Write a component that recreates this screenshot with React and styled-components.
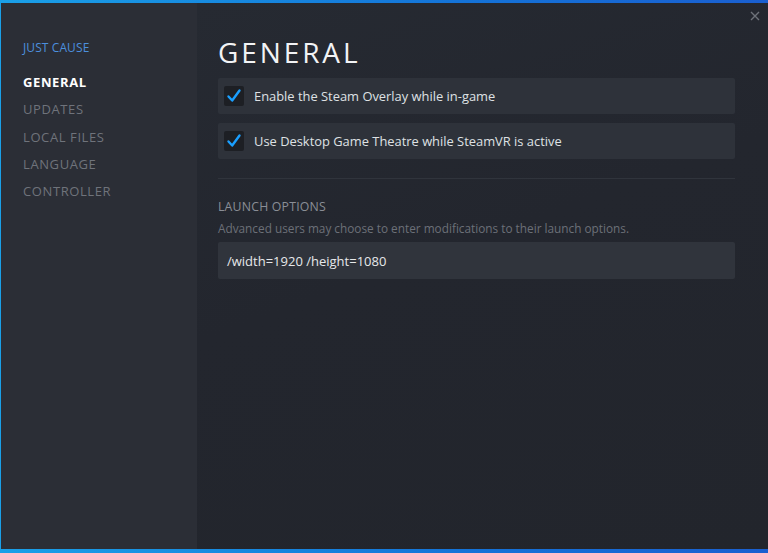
import React from "react";
import styled, { createGlobalStyle } from "styled-components";

const Global = createGlobalStyle`
  html, body { margin: 0; padding: 0; background: #1f6fd0; }
  body { font-family: "Open Sans", "Noto Sans", sans-serif; }
  #root { height: 553px; }
`;

const Frame = styled.div`
  width: 768px;
  height: 553px;
  box-sizing: border-box;
  background: linear-gradient(90deg, #1aa0e8 0%, #1473d8 60%, #1a5fd0 100%);
  padding: 3px 0 4px 1px;
  display: flex;
`;

const Window = styled.div`
  flex: 1;
  display: flex;
  position: relative;
  min-height: 0;
`;

const Sidebar = styled.nav`
  width: 196px;
  background: #2b2e36;
  padding-top: 36px;
  box-sizing: border-box;
  display: flex;
  flex-direction: column;
`;

const GameName = styled.div`
  color: #4b8fde;
  font-size: 12px;
  padding-left: 22px;
  margin-bottom: 13px;
  letter-spacing: 0.1px;
  line-height: 17px;
`;

const NavItem = styled.div`
  padding-left: 22px;
  height: 27.3px;
  line-height: 27px;
  font-size: 13px;
  letter-spacing: 0.6px;
  color: ${(p) => (p.$active ? "#ffffff" : "#6f737b")};
  font-weight: ${(p) => (p.$active ? 700 : 400)};
`;

const Main = styled.main`
  flex: 1;
  background: linear-gradient(160deg, #262a32 0%, #23262e 45%, #22252c 100%);
  padding: 30px 33px 0 21px;
  box-sizing: border-box;
`;

const Close = styled.div`
  position: absolute;
  top: 3px;
  right: 6px;
  width: 14px;
  height: 14px;
`;

const Title = styled.h1`
  margin: 0 0 7px 0;
  font-weight: 400;
  font-size: 28px;
  letter-spacing: 2.9px;
  color: #f2f3f5;
  line-height: 38px;
`;

const Row = styled.label`
  display: flex;
  align-items: center;
  height: 36px;
  background: #2e323a;
  border-radius: 2px;
  padding-left: 6px;
  margin-bottom: 9px;
  gap: 10px;
  color: #dfe1e4;
  font-size: 12.9px;
`;

const Box = styled.span`
  width: 20px;
  height: 20px;
  background: #1d1f24;
  border-radius: 2px;
  display: flex;
  align-items: center;
  justify-content: center;
`;

const Divider = styled.div`
  height: 1px;
  background: #30343c;
  margin: 19px 0 20px 0;
`;

const SectionLabel = styled.div`
  color: #8a8e96;
  font-size: 12.3px;
  letter-spacing: 0.2px;
  line-height: 16px;
  margin-bottom: 6px;
`;

const Help = styled.div`
  color: #6c7078;
  font-size: 11.8px;
  line-height: 15px;
  margin-bottom: 6px;
`;

const Input = styled.div`
  height: 37px;
  background: #30343c;
  border-radius: 2px;
  display: flex;
  align-items: center;
  padding-left: 9px;
  color: #e6e8ea;
  font-size: 13px;
`;

const Check = () => (
  <Box>
    <svg width="16" height="16" viewBox="0 0 16 16">
      <path d="M2.5 8.5 L6.2 12.5 L13.5 2.5" fill="none" stroke="#1a9fff" strokeWidth="2.4" strokeLinecap="round" strokeLinejoin="round" />
    </svg>
  </Box>
);

export default function App() {
  return (
    <>
      <Global />
      <Frame>
        <Window>
          <Sidebar>
            <GameName>JUST CAUSE</GameName>
            <NavItem $active>GENERAL</NavItem>
            <NavItem>UPDATES</NavItem>
            <NavItem>LOCAL FILES</NavItem>
            <NavItem>LANGUAGE</NavItem>
            <NavItem>CONTROLLER</NavItem>
          </Sidebar>
          <Main>
            <Title>GENERAL</Title>
            <Row>
              <Check />
              Enable the Steam Overlay while in-game
            </Row>
            <Row>
              <Check />
              Use Desktop Game Theatre while SteamVR is active
            </Row>
            <Divider />
            <SectionLabel>LAUNCH OPTIONS</SectionLabel>
            <Help>Advanced users may choose to enter modifications to their launch options.</Help>
            <Input>/width=1920 /height=1080</Input>
          </Main>
          <Close>
            <svg width="14" height="14" viewBox="0 0 14 14">
              <path d="M3 3 L11 11 M11 3 L3 11" stroke="#6e727a" strokeWidth="1.4" />
            </svg>
          </Close>
        </Window>
      </Frame>
    </>
  );
}
